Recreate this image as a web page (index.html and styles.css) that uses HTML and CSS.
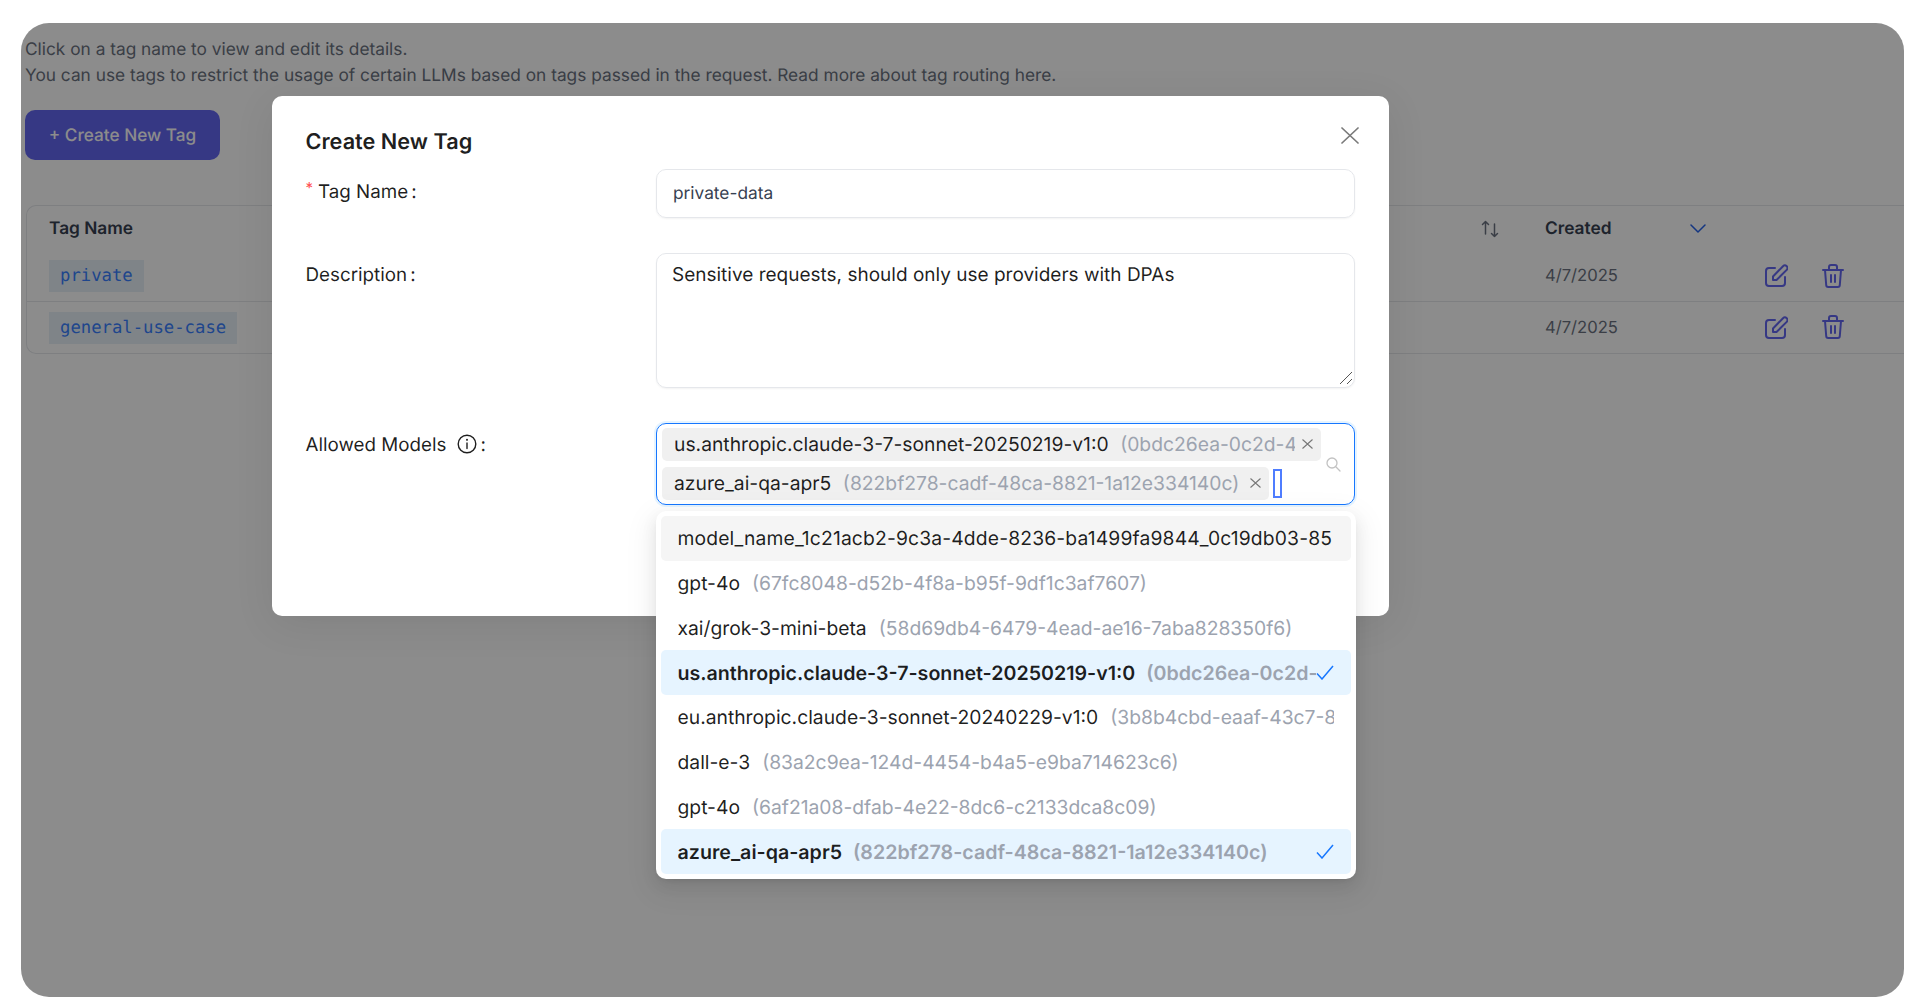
FILE: index.html
```html
<!DOCTYPE html>
<html lang="en">
<head>
<meta charset="utf-8">
<title>Tags</title>
<link rel="stylesheet" href="styles.css">
</head>
<body>
<main class="card">
  <div class="intro">
    <p>Click on a tag name to view and edit its details.</p>
    <p>You can use tags to restrict the usage of certain LLMs based on tags passed in the request. Read more about tag routing here.</p>
  </div>
  <button class="primary">+ Create New Tag</button>
  <div class="table">
    <div class="row head">
      <div class="c-name">Tag Name</div>
      <div class="c-sort"><svg width="20" height="18" viewBox="0 0 20 18" fill="none" stroke="#6b7280" stroke-width="1.5" stroke-linecap="round" stroke-linejoin="round"><path d="M5.5 14V1.5M2.5 4.5l3-3 3 3"/><path d="M14.5 4v12.5M11.5 13.5l3 3 3-3"/></svg></div>
      <div class="c-date">Created</div>
      <div class="c-chev"><svg width="16" height="9" viewBox="0 0 16 9" fill="none" stroke="#2563eb" stroke-width="1.5" stroke-linecap="round" stroke-linejoin="round"><path d="M1 1l7 7 7-7"/></svg></div>
    </div>
    <div class="row">
      <div class="c-name"><code class="pill">private</code></div>
      <div class="c-sort"></div>
      <div class="c-date">4/7/2025</div>
      <div class="c-actions">
        <svg width="23" height="23" viewBox="0 0 23 23" fill="none" stroke="#6366f1" stroke-width="2" stroke-linecap="round" stroke-linejoin="round"><path d="M10 4H4a3 3 0 0 0-3 3v12a3 3 0 0 0 3 3h13a3 3 0 0 0 3-3v-6"/><path d="M18 2.2a2.6 2.6 0 0 1 3.7 3.7L11.500 16H8v-3.500L18 2.200z"/></svg>
        <svg width="22" height="24" viewBox="0 0 22 24" fill="none" stroke="#6366f1" stroke-width="2" stroke-linecap="round" stroke-linejoin="round"><path d="M1 6h20"/><path d="M3 6l1.200 15a2 2 0 0 0 2 2h9.600a2 2 0 0 0 2-2L19 6"/><path d="M7 6V3a2 2 0 0 1 2-2h4a2 2 0 0 1 2 2v3"/><path d="M9 11v7M13 11v7"/></svg>
      </div>
    </div>
    <div class="row">
      <div class="c-name"><code class="pill">general-use-case</code></div>
      <div class="c-sort"></div>
      <div class="c-date">4/7/2025</div>
      <div class="c-actions">
        <svg width="23" height="23" viewBox="0 0 23 23" fill="none" stroke="#6366f1" stroke-width="2" stroke-linecap="round" stroke-linejoin="round"><path d="M10 4H4a3 3 0 0 0-3 3v12a3 3 0 0 0 3 3h13a3 3 0 0 0 3-3v-6"/><path d="M18 2.2a2.6 2.6 0 0 1 3.7 3.7L11.500 16H8v-3.500L18 2.200z"/></svg>
        <svg width="22" height="24" viewBox="0 0 22 24" fill="none" stroke="#6366f1" stroke-width="2" stroke-linecap="round" stroke-linejoin="round"><path d="M1 6h20"/><path d="M3 6l1.200 15a2 2 0 0 0 2 2h9.600a2 2 0 0 0 2-2L19 6"/><path d="M7 6V3a2 2 0 0 1 2-2h4a2 2 0 0 1 2 2v3"/><path d="M9 11v7M13 11v7"/></svg>
      </div>
    </div>
  </div>

  <div class="overlay"></div>

  <section class="modal">
    <h2>Create New Tag</h2>
    <svg class="close" width="18" height="17" viewBox="0 0 18 17" fill="none" stroke="#7a7a7a" stroke-width="1.7" stroke-linecap="round"><path d="M1 1l16 15M17 1L1 16"/></svg>

    <div class="field f-name">
      <label><span class="req">*</span>Tag Name<span class="colon">:</span></label>
      <div class="control input">private-data</div>
    </div>
    <div class="field f-desc">
      <label>Description<span class="colon">:</span></label>
      <div class="control textarea">Sensitive requests, should only use providers with DPAs
        <svg class="grip" width="14" height="14" viewBox="0 0 14 14" fill="none" stroke="#555" stroke-width="1"><path d="M1 13L13 1M8 13l5-5"/></svg>
      </div>
    </div>
    <div class="field f-models">
      <label>Allowed Models
        <svg class="info" width="20" height="20" viewBox="0 0 20 20" fill="none" stroke="#1f1f1f" stroke-width="1.4" stroke-linecap="round"><circle cx="10" cy="10" r="8.800"/><path d="M10 9v5.500"/><path d="M10 5.600v.3" stroke-width="1.800"/></svg><span class="colon">:</span></label>
      <div class="control select">
        <div class="stag t1"><span class="clip"><span>us.anthropic.claude-3-7-sonnet-20250219-v1:0</span><span class="id">(0bdc26ea-0c2d-4</span></span>
          <svg width="11" height="10" viewBox="0 0 11 10" fill="none" stroke="#777" stroke-width="1.100"><path d="M.5.5l10 9M10.500.5l-10 9"/></svg></div>
        <div class="stag t2"><span class="clip"><span>azure_ai-qa-apr5</span><span class="id">(822bf278-cadf-48ca-8821-1a12e334140c)</span></span>
          <svg width="11" height="10" viewBox="0 0 11 10" fill="none" stroke="#777" stroke-width="1.100"><path d="M.5.5l10 9M10.500.5l-10 9"/></svg></div>
        <span class="caret"></span>
        <svg class="search" width="15" height="15" viewBox="0 0 15 15" fill="none" stroke="#c2c2c2" stroke-width="1.300" stroke-linecap="round"><circle cx="6" cy="6" r="5"/><path d="M9.800 9.800L14 14"/></svg>
      </div>
    </div>
  </section>

  <ul class="dropdown">
    <li class="active"><span class="clip"><span>model_name_1c21acb2-9c3a-4dde-8236-ba1499fa9844_0c19db03-85</span></span></li>
    <li><span class="clip"><span>gpt-4o</span><span class="id">(67fc8048-d52b-4f8a-b95f-9df1c3af7607)</span></span></li>
    <li><span class="clip"><span>xai/grok-3-mini-beta</span><span class="id">(58d69db4-6479-4ead-ae16-7aba828350f6)</span></span></li>
    <li class="sel"><span class="clip"><span>us.anthropic.claude-3-7-sonnet-20250219-v1:0</span><span class="id">(0bdc26ea-0c2d-</span></span><svg width="18" height="15" viewBox="0 0 18 15" fill="none" stroke="#1677ff" stroke-width="1.500"><path d="M1 8.500l5 5.500L17 1"/></svg></li>
    <li><span class="clip"><span>eu.anthropic.claude-3-sonnet-20240229-v1:0</span><span class="id">(3b8b4cbd-eaaf-43c7-8</span></span></li>
    <li><span class="clip"><span>dall-e-3</span><span class="id">(83a2c9ea-124d-4454-b4a5-e9ba714623c6)</span></span></li>
    <li><span class="clip"><span>gpt-4o</span><span class="id">(6af21a08-dfab-4e22-8dc6-c2133dca8c09)</span></span></li>
    <li class="sel"><span class="clip"><span>azure_ai-qa-apr5</span><span class="id">(822bf278-cadf-48ca-8821-1a12e334140c)</span></span><svg width="18" height="15" viewBox="0 0 18 15" fill="none" stroke="#1677ff" stroke-width="1.500"><path d="M1 8.500l5 5.500L17 1"/></svg></li>
  </ul>
</main>
</body>
</html>
```
FILE: styles.css
```css
* { box-sizing: border-box; }
html, body { margin: 0; height: 100%; background: #fff; }
body { padding: 23px 16px 9px 21px; font-family: Inter, "Liberation Sans", sans-serif; overflow: hidden; text-rendering: geometricPrecision; }
p, h2, ul { margin: 0; padding: 0; }

.card {
  position: relative;
  height: 974px;
  border-radius: 28px;
  overflow: hidden;
  background: #fff;
  padding: 14px 0 0 4px;
}
.intro { font-size: 17.3px; line-height: 26px; color: #6b7280; }
.primary {
  display: block;
  margin-top: 21px;
  width: 195px;
  height: 50px;
  border: 0;
  border-radius: 10px;
  background: #6366f1;
  color: #fff;
  font: 500 17.2px Inter, sans-serif;
  text-rendering: geometricPrecision;
}
.table {
  margin: 45px -4px 0 1px;
  border: 1px solid #e5e7eb;
  border-right: 0;
  border-radius: 10px 0 0 10px;
  font-size: 17.3px;
  color: #6b7280;
}
.row { display: flex; align-items: center; height: 51px; border-bottom: 1px solid #e5e7eb; }
.row:last-child { border-bottom: 0; }
.row.head { height: 45px; border-bottom: 0; font-weight: 600; color: #374151; }
.c-name { width: 1453px; padding-left: 22px; }
.c-sort { width: 65px; display: flex; }
.c-date { width: 145px; }
.c-chev { display: flex; }
.row .c-date { font-size: 16.6px; }
.row.head .c-date { font-size: 17.3px; }
.c-actions { display: flex; align-items: center; gap: 34px; margin: 0 0 1px 75px; }
.pill {
  display: inline-block;
  height: 32px;
  padding: 0 11px;
  background: #e8f0f8;
  color: #3a80ff;
  font: 17.25px/32px "DejaVu Sans Mono", monospace;
}

.overlay { position: absolute; inset: 0; background: rgba(0,0,0,.45); }

.modal {
  position: absolute;
  left: 251px;
  top: 73px;
  width: 1117px;
  height: 520px;
  background: #fff;
  border-radius: 10px;
  padding: 33px 34px 0 33.5px;
  box-shadow: 0 8px 40px rgba(0,0,0,.08);
  color: rgba(0,0,0,.88);
}
.modal h2 { font-size: 21.7px; line-height: 26px; font-weight: 600; }
.close { position: absolute; left: 1069px; top: 31px; }
.field { display: flex; align-items: flex-start; }
.field label { flex: none; width: 350.5px; height: 45px; display: flex; align-items: center; font-size: 18.8px; }
.f-name { margin-top: 14px; }
.f-desc { margin-top: 35px; }
.f-models { margin-top: 35px; }
.f-desc label { height: 43px; }
.f-models label { height: 42px; }
.req { color: #ff4d4f; font-size: 15px; margin-right: 5px; position: relative; top: -4px; }
.colon { margin-left: 3px; }
.info { margin-left: 11px; }
.control { width: 700px; border: 1px solid #e5e7eb; border-radius: 10px; }
.input { height: 49px; padding: 0 16px; line-height: 47px; font-size: 17.3px; color: #374151; box-shadow: 0 1px 2px rgba(0,0,0,.05); }
.textarea { position: relative; height: 135px; padding: 8px 15px; font-size: 19px; line-height: 26px; box-shadow: 0 1px 2px rgba(0,0,0,.05); }
.grip { position: absolute; right: 1px; bottom: 2px; }
.select {
  position: relative;
  height: 82px;
  border-color: #1677ff;
  box-shadow: 0 0 0 2px rgba(5,145,255,.1);
  padding: 4px 5px;
  font-size: 19.3px;
  display: flex;
  flex-wrap: wrap;
  align-content: flex-start;
  gap: 6px;
}
.stag {
  height: 33px;
  background: #f0f0f0;
  border-radius: 5px;
  padding: 0 8px 2px 12px;
  display: flex;
  align-items: center;
  gap: 7px;
}
.t1 { width: 659px; }
.t2 { width: 607px; }
.clip { display: flex; flex: 1; min-width: 0; overflow: hidden; white-space: nowrap; }
.id { color: #9ca3af; margin-left: 12px; }
.stag .id { margin-left: 11.5px; }
.caret { width: 9px; height: 29px; border: 2px solid #4f7dff; margin: 2px 0 0 -2px; }
.search { position: absolute; left: 669px; top: 33px; }

.dropdown {
  position: absolute;
  left: 634.5px;
  top: 488px;
  width: 700px;
  height: 368px;
  padding: 5px;
  list-style: none;
  background: #fff;
  border-radius: 10px;
  box-shadow: 0 6px 16px rgba(0,0,0,.08), 0 3px 6px -4px rgba(0,0,0,.12), 0 9px 28px 8px rgba(0,0,0,.05);
  font-size: 19.3px;
  color: rgba(0,0,0,.88);
}
.dropdown li {
  height: 44.75px;
  padding: 0 17px;
  border-radius: 5px;
  display: flex;
  align-items: center;
}
.dropdown .active { background: #f5f5f5; letter-spacing: .15px; }
.dropdown .sel { background: #e6f4ff; font-weight: 600; font-size: 19.65px; }
.dropdown .sel .id { margin-left: 11px; }
.dropdown svg { flex: none; }
```
